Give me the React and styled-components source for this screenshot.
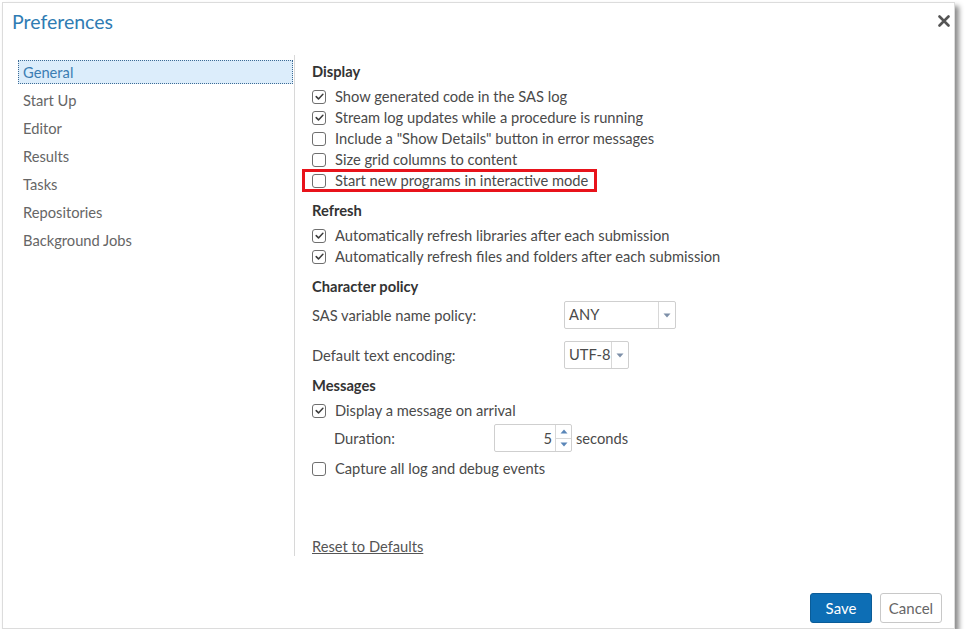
import React from 'react';
import styled, { createGlobalStyle } from 'styled-components';

const GlobalStyle = createGlobalStyle`
  html, body {
    margin: 0;
    padding: 0;
    background: #ffffff;
    font-family: Lato, 'Open Sans', sans-serif;
  }
`;

const navItems = ['General', 'Start Up', 'Editor', 'Results', 'Tasks', 'Repositories', 'Background Jobs'];

const Check = ({ checked }) => (
  <StBox>
    {checked && (
      <svg width="11" height="11" viewBox="0 0 11 11">
        <path d="M2.2 5.6 L4.5 7.9 L8.9 3.2" fill="none" stroke="#3b3b3b" strokeWidth="1.5" strokeLinecap="round" strokeLinejoin="round" />
      </svg>
    )}
  </StBox>
);

const CheckRow = ({ checked, label, highlight }) => (
  <StCheckRow highlight={highlight}>
    <Check checked={checked} />
    <span>{label}</span>
  </StCheckRow>
);

const Caret = () => (
  <svg width="8" height="5" viewBox="0 0 8 5">
    <path d="M0.5 0.5 L7.5 0.5 L4 4.5 Z" fill="#7d8fa8" />
  </svg>
);

class App extends React.Component {
  render() {
    return (
      <>
        <GlobalStyle />
        <StDialog>
          <StHeader>
            <StTitle>Preferences</StTitle>
            <StClose>
              <svg width="12" height="12" viewBox="0 0 12 12">
                <path d="M1.5 1.5 L10.5 10.5 M10.5 1.5 L1.5 10.5" stroke="#555" strokeWidth="2.6" strokeLinecap="round" />
              </svg>
            </StClose>
          </StHeader>

          <StMain>
            <StNav>
              {navItems.map((item, i) => (
                <StNavItem key={i} selected={i === 0}>{item}</StNavItem>
              ))}
            </StNav>

            <StContent>
              <StSection>
                <StHeading>Display</StHeading>
                <CheckRow checked label="Show generated code in the SAS log" />
                <CheckRow checked label="Stream log updates while a procedure is running" />
                <CheckRow label={'Include a "Show Details" button in error messages'} />
                <CheckRow label="Size grid columns to content" />
                <CheckRow highlight label="Start new programs in interactive mode" />
              </StSection>

              <StSection>
                <StHeading>Refresh</StHeading>
                <CheckRow checked label="Automatically refresh libraries after each submission" />
                <CheckRow checked label="Automatically refresh files and folders after each submission" />
              </StSection>

              <StSection gap={6}>
                <StHeading>Character policy</StHeading>
                <StFieldRow top={0}>
                  <StFieldLabel>SAS variable name policy:</StFieldLabel>
                  <StSelect width={112}>
                    <StSelectValue>ANY</StSelectValue>
                    <StSelectBtn><Caret /></StSelectBtn>
                  </StSelect>
                </StFieldRow>
                <StFieldRow top={12}>
                  <StFieldLabel>Default text encoding:</StFieldLabel>
                  <StSelect width={65}>
                    <StSelectValue>UTF-8</StSelectValue>
                    <StSelectBtn><Caret /></StSelectBtn>
                  </StSelect>
                </StFieldRow>
              </StSection>

              <StSection gap={6}>
                <StHeading>Messages</StHeading>
                <CheckRow checked label="Display a message on arrival" />
                <StDurationRow>
                  <StDurationLabel>Duration:</StDurationLabel>
                  <StSpinner>
                    <StSpinValue>5</StSpinValue>
                    <StSpinBtns>
                      <StSpinHalf>
                        <svg width="8" height="5" viewBox="0 0 8 5"><path d="M0.5 4.5 L7.5 4.5 L4 0.5 Z" fill="#5a86b8" /></svg>
                      </StSpinHalf>
                      <StSpinHalf>
                        <svg width="8" height="5" viewBox="0 0 8 5"><path d="M0.5 0.5 L7.5 0.5 L4 4.5 Z" fill="#5a86b8" /></svg>
                      </StSpinHalf>
                    </StSpinBtns>
                  </StSpinner>
                  <StUnit>seconds</StUnit>
                </StDurationRow>
                <CheckRow label="Capture all log and debug events" />
              </StSection>

              <StReset>Reset to Defaults</StReset>
            </StContent>
          </StMain>

          <StFooter>
            <StSave>Save</StSave>
            <StCancel>Cancel</StCancel>
          </StFooter>
        </StDialog>
      </>
    );
  }
} export default App;

const StDialog = styled.div`
  box-sizing: border-box;
  margin: 2px 0 0 2px;
  width: 953px;
  height: 627px;
  background: #fff;
  border: 1px solid #dcdcdc;
  box-shadow: 4px 4px 5px rgba(0,0,0,0.45);
  display: flex;
  flex-direction: column;
`;

const StHeader = styled.div`
  display: flex;
  align-items: center;
  justify-content: space-between;
  height: 37px;
  padding: 0 4px 0 9px;
`;

const StTitle = styled.div`
  font-size: 19.5px;
  color: #2f7cb3;
`;

const StClose = styled.div`
  display: flex;
  align-items: center;
  padding-bottom: 2px;
`;

const StMain = styled.div`
  display: flex;
  margin-top: 15px;
  height: 501px;
`;

const StNav = styled.div`
  width: 277px;
  margin-left: 15px;
  padding-top: 5px;
  border-right: 1px solid #d8d8d8;
  box-sizing: border-box;
  display: flex;
  flex-direction: column;
  gap: 4px;
`;

const StNavItem = styled.div`
  box-sizing: border-box;
  height: 24px;
  line-height: 22px;
  padding-left: 4px;
  margin-right: 1px;
  font-size: 14.7px;
  color: ${props => props.selected ? '#3b7db3' : '#666'};
  background: ${props => props.selected ? '#dcedfb' : 'transparent'};
  border: 1px dotted ${props => props.selected ? '#3d6b95' : 'transparent'};
`;

const StContent = styled.div`
  flex: 1;
  display: flex;
  flex-direction: column;
  padding-left: 17px;
  padding-top: 6px;
  font-size: 14.7px;
  color: #4a4a4a;
`;

const StSection = styled.div`
  display: flex;
  flex-direction: column;
  margin-bottom: ${props => props.gap ? props.gap : 9}px;
`;

const StHeading = styled.div`
  font-weight: 700;
  height: 21px;
  line-height: 21px;
  margin-bottom: 4px;
  color: #333;
`;

const StCheckRow = styled.div`
  display: flex;
  align-items: center;
  gap: 9px;
  height: 21px;
  line-height: 21px;
  width: fit-content;
  position: relative;
  &::after {
    content: '';
    display: ${props => props.highlight ? 'block' : 'none'};
    position: absolute;
    left: -10px;
    right: -9px;
    top: -1px;
    bottom: -1px;
    border: 3px solid #e8131b;
  }
`;

const StBox = styled.div`
  box-sizing: border-box;
  width: 14px;
  height: 14px;
  border: 1px solid #6f6f6f;
  border-radius: 3px;
  display: flex;
  align-items: center;
  justify-content: center;
  background: #fff;
  flex-shrink: 0;
`;

const StFieldRow = styled.div`
  display: flex;
  align-items: center;
  height: 28px;
  margin-top: ${props => props.top}px;
`;

const StFieldLabel = styled.div`
  width: 252px;
`;

const StSelect = styled.div`
  box-sizing: border-box;
  width: ${props => props.width}px;
  height: 28px;
  border: 1px solid #cfcfcf;
  border-radius: 2px;
  display: flex;
  align-items: stretch;
`;

const StSelectValue = styled.div`
  flex: 1;
  padding-left: 4px;
  line-height: 24px;
  white-space: nowrap;
  overflow: hidden;
  color: #4a4a4a;
`;

const StSelectBtn = styled.div`
  width: 16px;
  flex-shrink: 0;
  border-left: 1px solid #d8d8d8;
  display: flex;
  align-items: center;
  justify-content: center;
`;

const StDurationRow = styled.div`
  display: flex;
  align-items: center;
  height: 28px;
  margin-top: 3px;
  margin-bottom: 6px;
`;

const StDurationLabel = styled.div`
  width: 160px;
  padding-left: 22px;
`;

const StSpinner = styled.div`
  box-sizing: border-box;
  width: 78px;
  height: 28px;
  border: 1px solid #cfcfcf;
  border-radius: 2px;
  display: flex;
`;

const StSpinValue = styled.div`
  flex: 1;
  text-align: right;
  padding-right: 3px;
  line-height: 26px;
`;

const StSpinBtns = styled.div`
  width: 15px;
  border-left: 1px solid #d8d8d8;
  display: flex;
  flex-direction: column;
`;

const StSpinHalf = styled.div`
  flex: 1;
  display: flex;
  align-items: center;
  justify-content: center;
  & + & {
    border-top: 1px solid #d8d8d8;
  }
`;

const StUnit = styled.div`
  margin-left: 4px;
`;

const StReset = styled.div`
  margin-top: auto;
  margin-bottom: 0px;
  height: 20px;
  line-height: 20px;
  text-decoration: underline;
  color: #555;
`;

const StFooter = styled.div`
  flex: 1;
  display: flex;
  justify-content: flex-end;
  align-items: flex-start;
  gap: 8px;
  padding: 37px 12px 0 0;
`;

const StSave = styled.div`
  box-sizing: border-box;
  width: 62px;
  height: 30px;
  border-radius: 3px;
  background: #0d6eb5;
  border: 1px solid #0a5c98;
  color: #fff;
  font-size: 15px;
  display: flex;
  align-items: center;
  justify-content: center;
`;

const StCancel = styled.div`
  box-sizing: border-box;
  width: 62px;
  height: 30px;
  border-radius: 3px;
  background: #fff;
  border: 1px solid #c8c8c8;
  color: #666;
  font-size: 15px;
  display: flex;
  align-items: center;
  justify-content: center;
`;
